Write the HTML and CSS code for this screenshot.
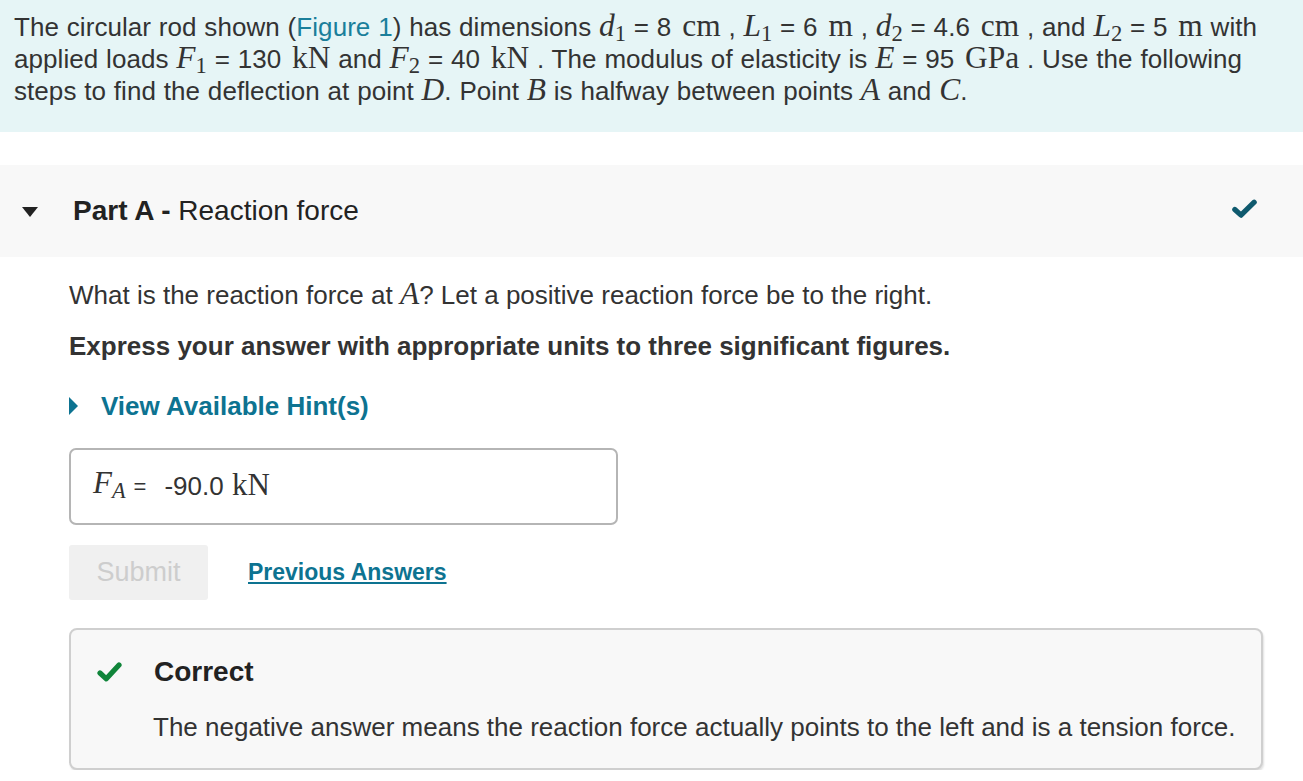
FILE: index.html
```html
<!DOCTYPE html>
<html>
<head>
<meta charset="utf-8">
<link rel="stylesheet" href="styles.css">
</head>
<body>
<div class="intro">
  <p>The circular rod shown (<a class="fig">Figure 1</a>) has dimensions <span class="m"><i>d</i><sub>1</sub></span> = 8 <span class="m unit">cm</span> , <span class="m"><i>L</i><sub>1</sub></span> = 6 <span class="m unit">m</span> , <span class="m"><i>d</i><sub>2</sub></span> = 4.6 <span class="m unit">cm</span> , and <span class="m"><i>L</i><sub>2</sub></span> = 5 <span class="m unit">m</span> with applied loads <span class="m"><i>F</i><sub>1</sub></span> = 130 <span class="m unit">kN</span> and <span class="m"><i>F</i><sub>2</sub></span> = 40 <span class="m unit">kN</span> . The modulus of elasticity is <span class="m"><i>E</i></span> = 95 <span class="m unit">GPa</span> . Use the following steps to find the deflection at point <span class="m"><i>D</i></span>. Point <span class="m"><i>B</i></span> is halfway between points <span class="m"><i>A</i></span> and <span class="m"><i>C</i></span>.</p>
</div>

<div class="part-header">
  <span class="caret-down"></span>
  <h2 class="part-title"><b>Part A -</b> Reaction force</h2>
  <svg class="head-check" width="25" height="20" viewBox="0 0 25 20"><path d="M2.8 10.5 L9 16.2 L22.2 3.2" fill="none" stroke="#0f5a6e" stroke-width="5.2" stroke-linecap="round" stroke-linejoin="round"/></svg>
</div>

<div class="part-body">
  <p class="question">What is the reaction force at <span class="m"><i>A</i></span>? Let a positive reaction force be to the right.</p>
  <p class="instr">Express your answer with appropriate units to three significant figures.</p>
  <div class="hint"><span class="caret-right"></span><span class="hint-text">View Available Hint(s)</span></div>
  <div class="answer-box">
    <span class="m ans-var"><i>F</i><sub><i>A</i></sub></span><span class="eq">=</span><span class="ans-val">-90.0 <span class="m ans-unit">kN</span></span>
  </div>
  <div class="actions">
    <button class="submit">Submit</button>
    <a class="prev">Previous Answers</a>
  </div>
  <div class="feedback">
    <div class="fb-head">
      <svg class="fb-check" width="25" height="22" viewBox="0 0 25 22"><path d="M3 12 L9.3 17.8 L22 4" fill="none" stroke="#10853a" stroke-width="5.2" stroke-linecap="round" stroke-linejoin="round"/></svg>
      <span class="fb-title">Correct</span>
    </div>
    <p class="fb-text">The negative answer means the reaction force actually points to the left and is a tension force.</p>
  </div>
</div>
</body>
</html>
```

FILE: styles.css
```css
html, body {
  margin: 0;
  padding: 0;
  background: #ffffff;
}
body {
  font-family: "Liberation Sans", Arial, sans-serif;
  color: #333333;
}
p { margin: 0; }

.m {
  font-family: "Liberation Serif", "Times New Roman", serif;
  font-size: 1.21em;
  line-height: 0;
  letter-spacing: 0;
}
.m sub {
  font-style: normal;
  font-size: 0.72em;
  line-height: 0;
  vertical-align: -0.22em;
}
.unit { margin-left: 3px; }

.intro {
  background: #e6f5f6;
  padding: 11px 0 25px 14px;
  height: 96px;
}
.intro p {
  max-width: 1262px;
  font-size: 26px;
  line-height: 32px;
  letter-spacing: 0.06px;
  word-spacing: 0.5px;
}
.fig {
  color: #1a7f9b;
}

.part-header {
  margin-top: 33px;
  height: 92px;
  background: #f8f8f8;
  display: flex;
  align-items: center;
  padding: 0 46px 0 22px;
}
.caret-down {
  width: 0;
  height: 0;
  border-left: 8px solid transparent;
  border-right: 8px solid transparent;
  border-top: 10px solid #222;
  margin-top: 1px;
}
.part-title {
  margin: 0 0 0 35px;
  font-size: 28px;
  font-weight: normal;
  color: #222;
  flex: 1;
}
.part-title b { font-weight: bold; }
.head-check { margin-top: -4px; }

.part-body {
  padding: 22px 40px 0 69px;
}
.question {
  font-size: 26px;
  line-height: 32px;
  color: #333;
}
.instr {
  margin-top: 19px;
  font-size: 26px;
  font-weight: bold;
  line-height: 32px;
  color: #333;
}
.hint {
  margin-top: 28px;
  display: flex;
  align-items: center;
  height: 32px;
}
.caret-right {
  width: 0;
  height: 0;
  border-top: 9px solid transparent;
  border-bottom: 9px solid transparent;
  border-left: 9px solid #0d7391;
}
.hint-text {
  margin-left: 23px;
  font-size: 26px;
  font-weight: bold;
  color: #0d7391;
}
.answer-box {
  margin-top: 26px;
  width: 549px;
  height: 77px;
  box-sizing: border-box;
  border: 2px solid #b5b5b5;
  border-radius: 7px;
  display: flex;
  align-items: center;
  padding-left: 22px;
  color: #333;
}
.ans-var { font-size: 31px; }
.eq { margin: 0 18px 0 8px; font-size: 22px; }
.ans-val { font-size: 26px; }
.ans-val .ans-unit { font-size: 31px; margin-left: 1px; }

.actions {
  margin-top: 20px;
  display: flex;
  align-items: center;
}
.submit {
  width: 139px;
  height: 55px;
  border: none;
  border-radius: 3px;
  background: #f0f0f0;
  color: #cdcdcd;
  font-family: "Liberation Sans", Arial, sans-serif;
  font-size: 27px;
  padding: 0;
}
.prev {
  margin-left: 40px;
  font-size: 23px;
  font-weight: bold;
  color: #0d7391;
  text-decoration: underline;
}

.feedback {
  margin-top: 28px;
  width: 1194px;
  height: 142px;
  box-sizing: border-box;
  border: 2px solid #cfcfcf;
  border-radius: 8px;
  background: #f8f8f8;
  box-shadow: 1px 2px 2px rgba(0,0,0,0.12);
  padding: 24px 6px 0 26px;
}
.fb-head {
  display: flex;
  align-items: center;
  height: 36px;
}
.fb-title {
  margin-left: 32px;
  font-size: 28px;
  font-weight: bold;
  color: #222;
}
.fb-text {
  margin-top: 21px;
  margin-left: 56px;
  font-size: 26px;
  line-height: 32px;
  color: #333;
}
```
